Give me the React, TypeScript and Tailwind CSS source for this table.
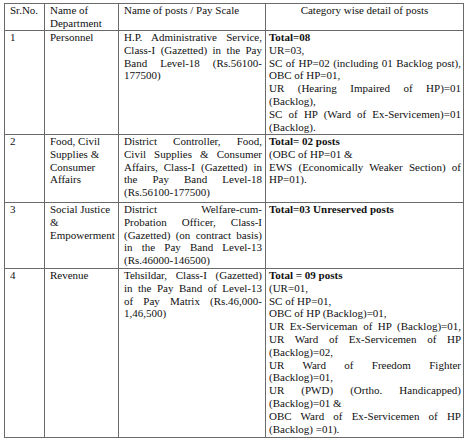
type Line = { t: string; j?: boolean; b?: boolean };

type Row = {
  no: string;
  dept: string[];
  post: Line[];
  detail: Line[];
  h: string;
};

const rows: Row[] = [
  {
    no: "1",
    dept: ["Personnel"],
    post: [
      { t: "H.P. Administrative Service,", j: true },
      { t: "Class-I (Gazetted) in the Pay", j: true },
      { t: "Band Level-18 (Rs.56100-", j: true },
      { t: "177500)" },
    ],
    detail: [
      { t: "Total=08", b: true },
      { t: "UR=03," },
      { t: "SC of HP=02 (including 01 Backlog post),", j: true },
      { t: "OBC of HP=01," },
      { t: "UR (Hearing Impaired of HP)=01", j: true },
      { t: "(Backlog)," },
      { t: "SC of HP (Ward of Ex-Servicemen)=01", j: true },
      { t: "(Backlog)." },
    ],
    h: "h-[104px]",
  },
  {
    no: "2",
    dept: ["Food, Civil", "Supplies &", "Consumer", "Affairs"],
    post: [
      { t: "District Controller, Food,", j: true },
      { t: "Civil Supplies & Consumer", j: true },
      { t: "Affairs, Class-I (Gazetted) in", j: true },
      { t: "the Pay Band Level-18", j: true },
      { t: "(Rs.56100-177500)" },
    ],
    detail: [
      { t: "Total= 02 posts", b: true },
      { t: "(OBC of HP=01 &" },
      { t: "EWS  (Economically Weaker Section) of", j: true },
      { t: "HP=01)." },
    ],
    h: "h-[68px]",
  },
  {
    no: "3",
    dept: ["Social Justice", "&", "Empowerment"],
    post: [
      { t: "District Welfare-cum-", j: true },
      { t: "Probation Officer, Class-I", j: true },
      { t: "(Gazetted) (on contract basis)", j: true },
      { t: "in the Pay Band Level-13", j: true },
      { t: "(Rs.46000-146500)" },
    ],
    detail: [{ t: "Total=03 Unreserved posts", b: true }],
    h: "h-[66px]",
  },
  {
    no: "4",
    dept: ["Revenue"],
    post: [
      { t: "Tehsildar, Class-I (Gazetted)", j: true },
      { t: "in the Pay Band of Level-13", j: true },
      { t: "of Pay Matrix (Rs.46,000-", j: true },
      { t: "1,46,500)" },
    ],
    detail: [
      { t: "Total = 09 posts", b: true },
      { t: "(UR=01," },
      { t: "SC of HP=01," },
      { t: "OBC of HP (Backlog)=01," },
      { t: "UR Ex-Serviceman of HP (Backlog)=01,", j: true },
      { t: "UR Ward of Ex-Servicemen of HP", j: true },
      { t: "(Backlog)=02," },
      { t: "UR Ward of Freedom Fighter", j: true },
      { t: "(Backlog)=01," },
      { t: "UR (PWD) (Ortho. Handicapped)", j: true },
      { t: "(Backlog)=01 &" },
      { t: "OBC Ward of Ex-Servicemen of HP", j: true },
      { t: "(Backlog) =01)." },
    ],
    h: "h-[169px]",
  },
];

const Lines = ({ lines }: { lines: Line[] }) => (
  <>
    {lines.map((l, i) => (
      <div
        key={i}
        className={
          (l.j ? "text-justify [text-align-last:justify] " : "") +
          (l.b ? "font-bold" : "")
        }
      >
        {l.t}
      </div>
    ))}
  </>
);

const cell = "border border-[#6a6a6a] align-top p-0";

export default function App() {
  return (
    <div className="bg-white w-[474px] h-[445px] pt-[3px] pl-[4px] font-['Liberation_Serif',serif] text-[11px] leading-[12.8px] text-[#111]">
      <table className="table-fixed border-collapse w-[459px]">
        <colgroup>
          <col className="w-[40px]" />
          <col className="w-[74px]" />
          <col className="w-[147px]" />
          <col className="w-[198px]" />
        </colgroup>
        <thead>
          <tr className="h-[27px]">
            <th className={`${cell} font-normal text-left pl-[5px]`}>Sr.No.</th>
            <th className={`${cell} font-normal text-left pl-[5px]`}>
              Name of
              <br />
              Department
            </th>
            <th className={`${cell} font-normal text-left pl-[5px]`}>Name of posts / Pay Scale</th>
            <th className={`${cell} font-normal text-center`}>Category wise detail of posts</th>
          </tr>
        </thead>
        <tbody>
          {rows.map((r) => (
            <tr key={r.no} className={r.h}>
              <td className={`${cell} pl-[5px]`}>{r.no}</td>
              <td className={`${cell} pl-[5px]`}>
                {r.dept.map((d, i) => (
                  <div key={i}>{d}</div>
                ))}
              </td>
              <td className={`${cell} pl-[5px] pr-[3px]`}>
                <Lines lines={r.post} />
              </td>
              <td className={`${cell} pl-[3px] pr-[2px]`}>
                <Lines lines={r.detail} />
              </td>
            </tr>
          ))}
        </tbody>
      </table>
    </div>
  );
}
